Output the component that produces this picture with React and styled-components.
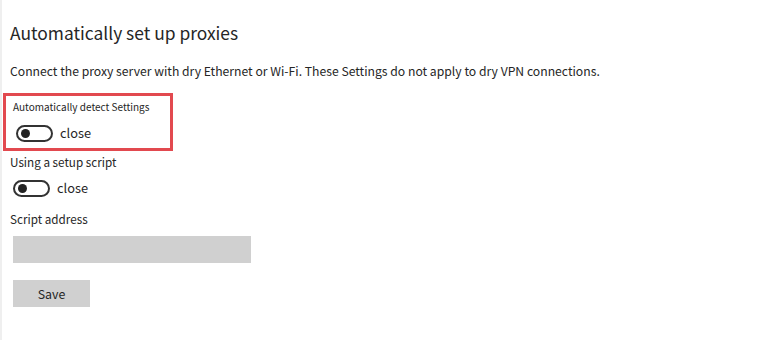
import React from 'react'
import styled, { createGlobalStyle } from 'styled-components'

const Colors = {
  text: '#262626',
  grey: '#d0d0d0',
  red: '#e2494f',
  border: '#efefef'
}

const GlobalStyle = createGlobalStyle`
  html, body {
    margin: 0;
    padding: 0;
    background: #fff;
    font-family: 'Noto Sans CJK SC', 'Noto Sans', sans-serif;
    color: ${Colors.text};
  }
`

const Page = styled.div`
  width: 768px;
  height: 340px;
  box-sizing: border-box;
  padding: 21px 0 0 8px;
  border-left: 2px solid ${Colors.border};
  overflow: hidden;
`

const Title = styled.h1`
  margin: 0;
  font-size: 17.4px;
  font-weight: 400;
  line-height: 24px;
`

const Description = styled.p`
  margin: 17px 0 0;
  font-size: 12.2px;
  line-height: 18px;
`

const Highlight = styled.div`
  margin: 13px 0 0 -7px;
  width: 170px;
  box-sizing: border-box;
  border: 3px solid ${Colors.red};
  padding: 3px 0 6px 7px;
`

const Field = styled.div`
  margin-top: ${props => props.top || 0}px;
`

const Label = styled.div`
  font-size: ${props => props.small ? 10 : 11.7}px;
  line-height: 16px;
`

const ToggleRow = styled.label`
  display: flex;
  align-items: center;
  gap: 7px;
  margin: ${props => props.top || 8}px 0 0 3px;
  font-size: 12.8px;
  line-height: 18px;
`

const Track = styled.span`
  position: relative;
  width: 37px;
  height: 17px;
  box-sizing: border-box;
  border: 2px solid #333;
  border-radius: 9px;
`

const Knob = styled.span`
  position: absolute;
  left: 2.5px;
  top: 2px;
  width: 9px;
  height: 9px;
  border-radius: 50%;
  background: #222;
`

const Input = styled.div`
  margin: 9px 0 0 3px;
  width: 238px;
  height: 27px;
  background: ${Colors.grey};
`

const Button = styled.button`
  display: block;
  margin: 17px 0 0 3px;
  width: 77px;
  height: 27px;
  border: none;
  background: ${Colors.grey};
  font-family: inherit;
  font-size: 12.4px;
  color: ${Colors.text};
  padding: 0;
`

function Toggle ({ top }) {
  return (
    <ToggleRow top={top}>
      <Track><Knob /></Track>
      close
    </ToggleRow>
  )
}

export default function App () {
  return (
    <>
      <GlobalStyle />
      <Page>
        <Title>Automatically set up proxies</Title>
        <Description>
          Connect the proxy server with dry Ethernet or Wi-Fi. These Settings do not apply to dry VPN connections.
        </Description>
        <Highlight>
          <Label small>Automatically detect Settings</Label>
          <Toggle top={9} />
        </Highlight>
        <Field top={3}>
          <Label>Using a setup script</Label>
          <Toggle top={9} />
        </Field>
        <Field top={14}>
          <Label>Script address</Label>
          <Input />
        </Field>
        <Button>Save</Button>
      </Page>
    </>
  )
}
